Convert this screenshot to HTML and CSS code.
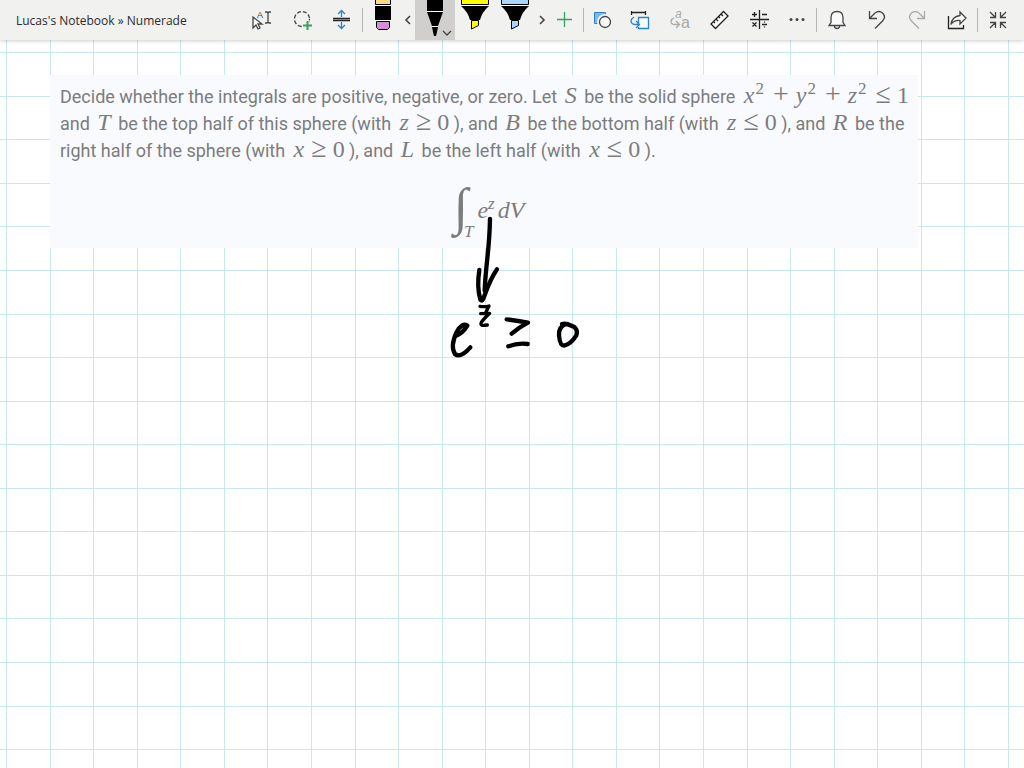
FILE: index.html
```html
<!DOCTYPE html>
<html lang="en">
<head>
    <meta charset="UTF-8">
    <meta name="viewport" content="width=device-width, initial-scale=1.0">
    <title>Lucas's Notebook » Numerade</title>
    <link rel="stylesheet" href="styles.css">
</head>
<body>
    <header class="topbar">
        <div class="breadcrumb">Lucas's Notebook » Numerade</div>

        <div class="toolbar">
            <button class="tool" aria-label="Select objects or type text">
                <svg viewBox="0 0 40 40"><path class="line paper" d="M11 17v11l3-3 2 4 2-1-2-4h4z"/><path class="line" d="M23 12h2l1 1 1-1h2M26 13v10M23 23h2l1-1 1 1h2"/><text class="glyph" x="15" y="18" font-size="9">A</text></svg>
            </button>
            <button class="tool" aria-label="Lasso select">
                <svg viewBox="0 0 40 40"><circle class="line dashed" cx="20" cy="19" r="7.500"/><path class="halo" d="M25.500 20v11M20 25.500h10"/><path class="line green thick" d="M25.500 21v9M21 25.500h9"/></svg>
            </button>
            <button class="tool" aria-label="Insert space">
                <svg viewBox="0 0 40 40"><path class="line dark" d="M11 18.500h17M11 20.500h17"/><path class="line blue" d="M19.500 17v-6M16 14l3.500-3.500 3.500 3.500M19.500 22v6M16 25l3.500 3.500 3.500-3.500"/></svg>
            </button>

            <span class="divider"></span>

            <button class="tool" aria-label="Eraser">
                <svg viewBox="0 0 40 40"><path class="outline" fill="#ffda86" d="M12.500-2h15v6.500h-15z"/><path class="white" d="M12 5h16v16H12z"/><path d="M12 6h16v14H12z"/><path class="outline" fill="#d48fd6" d="M13.500 21.500h13v6l-2 2h-9l-2-2z"/></svg>
            </button>
            <button class="tool scroll" aria-label="Previous pens">
                <svg viewBox="0 0 12 40"><path class="line bold" d="M7 16l-4 4 4 4"/></svg>
            </button>
            <button class="tool selected" aria-label="Black pen">
                <svg viewBox="0 0 40 40"><path d="M12 0h16v11H12z"/><path class="white" d="M12 11h16v1H12zM17 26h6v1h-6z"/><path d="M12 12h16l-5 14h-6zM17 27h6l-1 5-1 4h-2l-1-4z"/><path class="line" d="M28 31l4 4 4-4"/></svg>
            </button>
            <button class="tool" aria-label="Yellow highlighter">
                <svg viewBox="0 0 40 40"><path class="outline" fill="#ffff00" d="M6.500-2h27v6.500h-27z"/><path class="white" d="M6 5h28v1H6z"/><path d="M6 6h28q-7 6-9 14H15Q13 12 6 6z"/><path class="outline" fill="#ffff00" d="M16.500 20.500h7v5l-7 3.500z"/></svg>
            </button>
            <button class="tool" aria-label="Blue highlighter">
                <svg viewBox="0 0 40 40"><path class="outline" fill="#a8d5ff" d="M6.500-2h27v6.500h-27z"/><path class="white" d="M6 5h28v1H6z"/><path d="M6 6h28q-7 6-9 14H15Q13 12 6 6z"/><path class="outline" fill="#a8d5ff" d="M16.500 20.500h7v5l-7 3.500z"/></svg>
            </button>
            <button class="tool scroll" aria-label="More pens">
                <svg viewBox="0 0 12 40"><path class="line bold" d="M5 16l4 4-4 4"/></svg>
            </button>
            <button class="tool narrow" aria-label="Add pen">
                <svg viewBox="0 0 36 40"><path class="line green" d="M10 19.500h15M17.500 12v15"/></svg>
            </button>

            <span class="divider"></span>

            <button class="tool narrow" aria-label="Shapes">
                <svg viewBox="0 0 36 40"><path fill="#78b8ed" stroke="#2b82c9" d="M10.500 12.500h11v11h-11z"/><circle class="halo" cx="21" cy="22" r="6"/><circle class="line paper" cx="21" cy="22" r="5.500"/></svg>
            </button>
            <button class="tool" aria-label="Ink to shape">
                <svg viewBox="0 0 40 40"><path class="line dark" d="M11.500 11v4M11.500 12.500h14M25.500 11v4"/><path class="line blue paper" d="M18.500 17.500h10v11h-10z"/><path class="halo" d="M14 25h6"/><path class="line blue" d="M14 17q-3 2-3 4 0 3 4 3.500h4M16 21l3.500 3.500-3.500 3.500"/></svg>
            </button>
            <button class="tool muted" aria-label="Ink to text">
                <svg viewBox="0 0 40 40"><text class="glyph" x="15" y="18" font-size="12" font-style="italic">a</text><text class="glyph" x="21" y="28" font-size="16">a</text><path class="line" d="M14 18q-3 1-3 3.500 0 3 4 3h4M16 21l3.500 3.500-3.500 3.500"/></svg>
            </button>
            <button class="tool" aria-label="Ruler">
                <svg viewBox="0 0 40 40"><path class="line dark paper" d="M23.500 11.500l4.500 4.500-12.500 12.500L11 24z"/><path class="line dark" d="M21 14l2 2M18.500 16.500l1.500 1.500M16 19l2 2M13.500 21.500l1.500 1.500"/></svg>
            </button>
            <button class="tool" aria-label="Math">
                <svg viewBox="0 0 40 40"><path class="line dark" d="M10 19.500h19M19.500 10v19M12 14.500h5M14.500 12v5M22 14.500h5M12.500 22.500l4 4M16.500 22.500l-4 4M22 24.500h5M24.500 21.500v1M24.500 26.500v1"/></svg>
            </button>
            <button class="tool narrow" aria-label="More options">
                <svg viewBox="0 0 36 40"><circle class="dot" cx="11" cy="19.500" r="1.500"/><circle class="dot" cx="17" cy="19.500" r="1.500"/><circle class="dot" cx="23" cy="19.500" r="1.500"/></svg>
            </button>

            <span class="divider"></span>

            <button class="tool" aria-label="Notifications">
                <svg viewBox="0 0 40 40"><path class="line paper" d="M12 25.500h16l-2-3v-5q0-6-6-6t-6 6v5z"/><path class="line" d="M17.500 26q0 2.500 2.500 2.500t2.500-2.500"/></svg>
            </button>
            <button class="tool" aria-label="Undo">
                <svg viewBox="0 0 40 40"><path class="line" d="M12.500 11v7.500H20M12.500 18.500l5.500-5.500q4-3 7.500 0 4 4 0 8L18 28.500"/></svg>
            </button>
            <button class="tool muted" aria-label="Redo">
                <svg viewBox="0 0 40 40"><path class="line" d="M27.500 11v7.500H20M27.500 18.500L22 13q-4-3-7.500 0-4 4 0 8l7.500 7.500"/></svg>
            </button>
            <button class="tool" aria-label="Share">
                <svg viewBox="0 0 40 40"><path class="line dark" d="M11.500 16v12.500h15V25"/><path class="line paper" d="M23 12l6 6-6 6v-3.500q-6-.5-9 4 1-8 9-9z"/></svg>
            </button>

            <span class="divider"></span>

            <button class="tool" aria-label="Exit full screen">
                <svg viewBox="0 0 40 40"><path class="line" d="M12 12l5 5M12 17.500h5.500V12M28 12l-5 5M22.500 12v5.500H28M12 28l5-5M12 22.500h5.500V28M28 28l-5-5M22.500 28v-5.500H28"/></svg>
            </button>
        </div>
    </header>

    <main class="page">
        <svg class="grid" aria-hidden="true">
            <!-- nine squares per tile -->
            <pattern id="squares" x="6" y="12" width="392" height="392" patternUnits="userSpaceOnUse">
                <path d="M0 0h1v392H0zM44 0h1v392h-1zM87 0h1v392h-1zM131 0h1v392h-1zM174 0h1v392h-1zM218 0h1v392h-1zM261 0h1v392h-1zM305 0h1v392h-1zM349 0h1v392h-1z"/>
                <path d="M0 0h392v1H0zM0 44h392v1H0zM0 87h392v1H0zM0 131h392v1H0zM0 174h392v1H0zM0 218h392v1H0zM0 262h392v1H0zM0 305h392v1H0zM0 349h392v1H0z"/>
            </pattern>
            <rect width="100%" height="100%" fill="url(#squares)"/>
        </svg>

        <section class="problem">
            <p class="statement">
                Decide whether the integrals are positive, negative, or zero. Let <i>S</i> be the solid sphere <span class="math"><i>x</i><sup>2</sup><b>+</b><i>y</i><sup>2</sup><b>+</b><i>z</i><sup>2</sup><b>≤</b>1</span><br>
                and <i>T</i> be the top half of this sphere (with <span class="math"><i>z</i><b>≥</b>0</span> ), and <i>B</i> be the bottom half (with <span class="math"><i>z</i><b>≤</b>0</span> ), and <i>R</i> be the<br>
                right half of the sphere (with <span class="math"><i>x</i><b>≥</b>0</span> ), and <i>L</i> be the left half (with <span class="math"><i>x</i><b>≤</b>0</span> ).
            </p>
            <div class="formula">
                <span class="integral">∫</span><sub>T</sub>
                <span class="integrand">e<sup>z</sup>dV</span>
            </div>
        </section>

        <svg class="ink" viewBox="0 0 540 600" role="img" aria-label="Handwritten: arrow to e to the z, at least 0">
            <path d="M180 147Q179 200 172 265T164 362"/>
            <path d="M148 300Q140 350 151 389Q157 397 163 378Q182 325 201 298"/>
            <path class="fine" d="M150 409Q164 411 177 408L168 426M152 431L179 430Q162 446 154 457Q148 470 172 465"/>
            <path d="M77 498Q98 490 112 467Q96 457 80 486Q60 529 75 552Q91 566 121 532"/>
            <path d="M230 448Q263 452 294 458Q270 470 245 491"/>
            <path d="M235 529Q263 518 293 522"/>
            <path d="M407 462Q385 471 387 496Q390 527 402 527Q423 522 439 496Q446 474 423 467Q410 459 396 462"/>
        </svg>
    </main>
</body>
</html>
```
FILE: styles.css
```css
body {
    margin: 0;
    min-height: 100vh;
    display: flex;
    flex-direction: column;
    background-color: #fff;
    font-family: "Open Sans", sans-serif;
}
.topbar {
    display: flex;
    align-items: center;
    justify-content: space-between;
    height: 40px;
    padding: 0 6px 0 16px;
    background-color: #f1f1f0;
    box-shadow: 0 1px 4px rgba(0, 0, 0, 0.2);
    position: relative;
    z-index: 1;
}
.breadcrumb {
    font-size: 12px;
    color: #2b2b2b;
    white-space: nowrap;
}
.toolbar {
    display: flex;
    align-items: center;
}
.tool {
    width: 40px;
    height: 40px;
    padding: 0;
    border: none;
    background: none;
    color: #444;
    cursor: pointer;
}
.tool:hover {
    background-color: #e2e2e2;
}
.tool svg {
    display: block;
    width: 100%;
    height: 100%;
}
.narrow {
    width: 36px;
}
.scroll {
    width: 12px;
}
.selected {
    background-color: #d0cfce;
}
.muted {
    color: #aaa;
}
.divider {
    width: 1px;
    height: 24px;
    background-color: #b4b4b4;
}

/* icon strokes */
.line {
    fill: none;
    stroke: currentColor;
    stroke-width: 1.3;
}
.line.paper {
    fill: #fafafa;
}
.line.dark {
    stroke: #222;
}
.line.blue {
    stroke: #2b82c9;
}
.line.green {
    stroke: #36a05c;
}
.line.bold {
    stroke-width: 1.6;
}
.line.thick {
    stroke-width: 2;
}
.dashed {
    stroke-dasharray: 4 2;
}
.halo {
    fill: none;
    stroke: #f1f1f0;
    stroke-width: 4;
}
.outline {
    stroke: #000;
}
.white {
    fill: #fff;
}
.dot,
.glyph {
    fill: currentColor;
}

.page {
    flex: 1;
    position: relative;
    padding: 35px 106px 0 50px;
}
.grid {
    position: absolute;
    top: 0;
    left: 0;
    width: 100%;
    height: 100%;
    fill: #c8e8ef;
}
.problem {
    position: relative;
    padding: 8px 0 0 10px;
    background-color: #f9fafe;
    color: #7c7c7c;
}
.statement {
    margin: 0;
    font-family: Roboto, sans-serif;
    font-size: 18px;
    line-height: 27px;
    white-space: nowrap;
}
.statement i,
.math {
    padding: 0 3px;
    font-family: "Liberation Serif", serif;
    font-size: 24px;
    line-height: 1px;
}
.math {
    padding-right: 0;
}
.math i {
    padding: 0 1px;
}
.math b {
    margin: 0 6px;
    font-size: 28px;
    font-weight: normal;
}
sup,
sub {
    font-size: 17px;
    line-height: 1px;
}
sup {
    margin-right: 3px;
}
.formula {
    display: flex;
    align-items: center;
    justify-content: center;
    height: 76px;
    padding-top: 8px;
    font-family: "Liberation Serif", serif;
    font-size: 24px;
    font-style: italic;
}
.integral {
    padding-bottom: 8px;
    font-size: 52px;
}
.formula sub {
    align-self: flex-end;
    margin: 0 4px 0 -4px;
    padding-bottom: 16px;
}
.ink {
    position: absolute;
    top: 130px;
    left: 430px;
    width: 180px;
    height: 200px;
    fill: none;
    stroke: #000;
    stroke-width: 13;
    stroke-linecap: round;
    stroke-linejoin: round;
}
.ink .fine {
    stroke-width: 10;
}
```
